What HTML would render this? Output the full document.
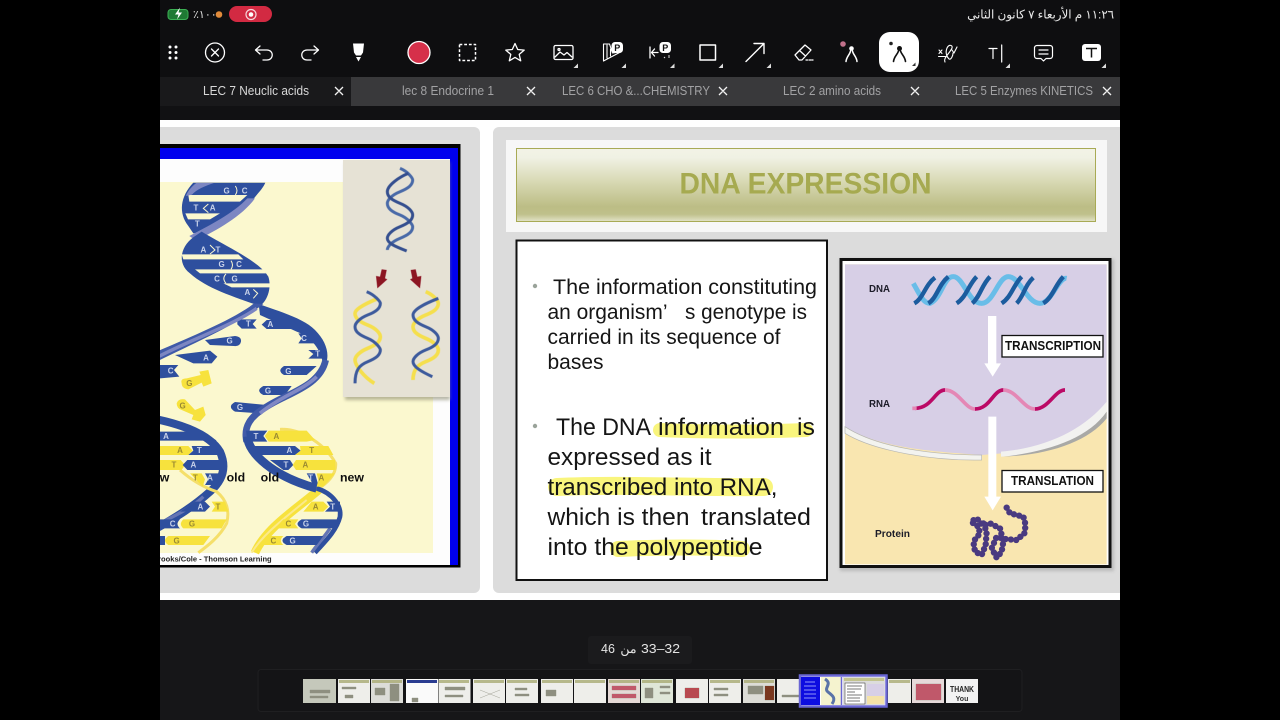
<!DOCTYPE html>
<html><head><meta charset="utf-8">
<style>html,body{margin:0;padding:0;background:#000;width:1280px;height:720px;overflow:hidden}svg{display:block}
.s{font-family:"Liberation Sans","Noto Sans CJK SC",sans-serif}
text{font-family:"Liberation Sans","DejaVu Sans",sans-serif}</style></head><body>
<svg xmlns="http://www.w3.org/2000/svg" width="1280" height="720" viewBox="0 0 1280 720">
<defs>
<linearGradient id="tg" x1="0" y1="0" x2="0" y2="1"><stop offset="0" stop-color="#f3f3e6"/><stop offset=".12" stop-color="#f0f1e4"/><stop offset=".45" stop-color="#d8d9b4"/><stop offset=".8" stop-color="#bcbd85"/><stop offset=".9" stop-color="#bfc08b"/><stop offset="1" stop-color="#e2e3c8"/></linearGradient>
<filter id="b"><feGaussianBlur stdDeviation="1.5"/></filter>
<filter id="sb"><feGaussianBlur stdDeviation=".9"/></filter>
<clipPath id="cr"><rect x="-10" y="158" width="950" height="1265"/></clipPath>
</defs>
<rect width="1280" height="720" fill="#000"/>
<rect x="160" width="960" height="77" fill="#0e0e10"/>
<rect x="160" y="77" width="960" height="43" fill="#111113"/>
<rect x="351" y="77" width="769" height="29" fill="#39393b"/>
<rect x="160" y="77" width="191" height="29" fill="#19191b"/>
<rect x="160" y="600" width="960" height="120" fill="#161618"/>

<!-- status bar -->
<rect x="168" y="9.500" width="20" height="10" rx="3" fill="#1f7a34" stroke="#3cb054" stroke-width="1"/>
<path d="M180 7.500l-5 7h3.500l-1.500 5 5-7h-3.500z" fill="#fff"/>
<text x="193" y="18" font-size="11" fill="#ddd" class="s">٪١٠٠</text>
<circle cx="219" cy="14.500" r="3.300" fill="#e08a3a"/>
<rect x="229" y="6" width="43" height="16" rx="8" fill="#d22a42"/>
<circle cx="251" cy="14.500" r="5" fill="none" stroke="#f5d5da" stroke-width="1.200"/><circle cx="251" cy="14.500" r="2.300" fill="#fff"/>
<text x="1114" y="18.500" font-size="11.800" fill="#e8e8e8" text-anchor="start" direction="rtl" class="s">١١:٢٦ م  الأربعاء ٧ كانون الثاني</text>

<!-- toolbar -->
<g fill="#fff">
<circle cx="170" cy="47" r="1.500"/><circle cx="176" cy="47" r="1.500"/><circle cx="170" cy="52.500" r="1.500"/><circle cx="176" cy="52.500" r="1.500"/><circle cx="170" cy="58" r="1.500"/><circle cx="176" cy="58" r="1.500"/>
</g>
<g fill="none" stroke="#fff" stroke-width="1.300" stroke-linecap="round" stroke-linejoin="round">
<circle cx="215" cy="52.500" r="9.500"/><path d="M211.500 49l7 7M218.500 49l-7 7"/>
<path d="M256 50h11c7 0 7 10 0 10h-4M260 46l-4.500 4 4.500 4"/>
<path d="M318 50h-11c-7 0-7 10 0 10h4M314 46l4.500 4-4.500 4"/>
<rect x="459.500" y="44.500" width="16" height="16" stroke-dasharray="2.800 1.900" stroke-linecap="butt" stroke-width="1.500"/>
<path d="M515 43.500l2.700 6 6.500.6-5 4.300 1.500 6.400-5.700-3.400-5.700 3.400 1.500-6.400-5-4.300 6.500-.6z"/>
<rect x="554" y="45.500" width="19" height="14" rx="1.500"/><path d="M555 57l5-5 4 3 3-2.500 5 4.500"/><circle cx="559" cy="49.500" r="1"/>
<path d="M603.500 44h6l3 9 8-1-17 9zM607 45v13M610.500 49v7" stroke-width="1.100"/>
<path d="M650 47v11M658 52.500h-6.500M654.500 49l-3 3.500 3 3.500"/>
<rect x="700" y="45" width="15.500" height="15" stroke-width="1.500"/>
<path d="M746 61.500l18-18M754 43.500h10v10" stroke-width="1.400"/>
<path d="M795 55l10-10 6 5-9 10h-3zM799.500 50.500l6 5.500M806 60h1.500M809 60h2M812 60h1"/>
<path d="M846 61.500c.5-5 4-7 4.500-10.500M857 61.500c-.5-5-4-7-4.500-10.500" stroke-width="1.500"/><circle cx="851.500" cy="48.500" r="2.300" fill="#fff" stroke="none"/>
<path d="M939 50l3 3.500M942 50l-3 3.500M938.500 56.500h7M945 62c-2-4 5-9 7-14 1-3-3-4-5 0-2 5 0 9 2 11 2 1 4-3 4-6M952 50l2 3 3-6" stroke-width="1.100"/>
<path d="M989 48.500h8M993 48.500v10M1001.700 45v17" stroke-width="1.200"/>
<path d="M1037 45.500h13a2.500 2.500 0 0 1 2.500 2.500v8a2.500 2.500 0 0 1-2.500 2.500h-4l-2.500 2.500-2.500-2.500h-4a2.500 2.500 0 0 1-2.500-2.500v-8a2.500 2.500 0 0 1 2.500-2.500zM1039 50h9M1039 54h9" stroke-width="1.200"/>
</g>
<path d="M353 43.500h11l-1 9-2 3h-5l-2-3z" fill="#fff"/><path d="M356 57h5l-2.500 4.500z" fill="#fff"/>
<circle cx="419" cy="52.500" r="11" fill="#d6304a" stroke="#fff" stroke-width="1.300"/>
<rect x="659.500" y="42" width="11.500" height="11" rx="3.500" fill="#fff"/><text x="665.300" y="51" font-size="9" font-weight="bold" text-anchor="middle" fill="#111">P</text>
<path d="M664 57l1 1M669 55v3" stroke="#ddd" stroke-width="1"/>
<rect x="611.500" y="42" width="11.500" height="11" rx="3.500" fill="#fff"/><text x="617.300" y="51" font-size="9" font-weight="bold" text-anchor="middle" fill="#111">P</text>
<circle cx="843" cy="44" r="2.800" fill="#c0708a"/>
<rect x="879" y="32" width="40" height="40" rx="11" fill="#fff"/>
<circle cx="891" cy="43.500" r="1.800" fill="#222"/>
<path d="M893.500 61.500c.5-5 4-7 5-10.500M905.500 61.500c-.5-5-4-7-5-10.500" fill="none" stroke="#111" stroke-width="1.600" stroke-linecap="round"/><circle cx="899.500" cy="48.500" r="2.500" fill="#111"/>
<path d="M915.500 62.500v3.500h-3.500z" fill="#333"/>
<rect x="1082" y="44" width="19" height="17" rx="3" fill="#fff"/><path d="M1086 48.500h11M1091.500 48.500v9" stroke="#111" stroke-width="1.500" fill="none"/>
<g fill="#ddd">
<path d="M578 63.500v4.500h-4.500z"/><path d="M626 63.500v4.500h-4.500z"/><path d="M674.500 63.500v4.500h-4.500z"/><path d="M723 63.500v4.500h-4.500z"/><path d="M771 63.500v4.500h-4.500z"/><path d="M1010 63.500v4.500h-4.500z"/><path d="M1106 63.500v4.500h-4.500z"/>
</g>

<!-- tabs -->
<g font-size="12.500" class="s">
<text x="203" y="95" fill="#d8d8d8" textLength="106" lengthAdjust="spacingAndGlyphs">LEC 7 Neuclic acids</text>
<text x="402" y="95" fill="#a2a2a4" textLength="92" lengthAdjust="spacingAndGlyphs">lec 8 Endocrine 1</text>
<text x="562" y="95" fill="#a2a2a4" textLength="148" lengthAdjust="spacingAndGlyphs">LEC 6 CHO &amp;...CHEMISTRY</text>
<text x="783" y="95" fill="#a2a2a4" textLength="98" lengthAdjust="spacingAndGlyphs">LEC 2 amino acids</text>
<text x="955" y="95" fill="#a2a2a4" textLength="138" lengthAdjust="spacingAndGlyphs">LEC 5 Enzymes KINETICS</text>
</g>
<g stroke="#f2f2f2" stroke-width="1.300" fill="none"><path d="M335 87l8 8M343 87l-8 8M527 87l8 8M535 87l-8 8M719 87l8 8M727 87l-8 8M911 87l8 8M919 87l-8 8M1103 87l8 8M1111 87l-8 8"/></g>

<!-- slide area -->
<rect x="160" y="120" width="960" height="480" fill="#fff"/>
<rect x="140" y="127" width="340" height="466" rx="6" fill="#dcdcdc"/>
<rect x="493" y="127" width="647" height="466" rx="6" fill="#dcdcdc"/>

<!-- left image -->
<rect x="140" y="144" width="320.500" height="423.500" fill="#000"/>
<rect x="140" y="148" width="318" height="417" fill="#0000ee"/>
<rect x="140" y="159" width="310" height="406" fill="#fdfdfd"/>
<rect x="140" y="182" width="293" height="371" fill="#fbf8cf"/>
<rect x="345" y="162" width="105" height="238" fill="#8a8a70" opacity=".6" filter="url(#b)"/>
<rect x="343" y="160" width="107" height="237" fill="#e6e2d5"/>
<g transform="translate(160 130) scale(.33333)" filter="url(#sb)">
 <g clip-path="url(#cr)">
 <!-- upper lobe -->
 <path d="M100 158C60 200 55 250 85 288L100 310L130 305C190 275 260 235 290 195C305 178 312 168 316 158Z" fill="#2f4f9e"/>
 <path d="M85 195H262L240 215H88ZM76 250H180L150 268H84Z" fill="#fbf8cf"/>
 <path d="M110 158C92 172 82 186 78 198L96 194C110 178 135 168 165 158Z" fill="#7c86c2"/>
 <path d="M262 205C220 250 150 285 88 318L108 332C170 300 245 260 285 205Z" fill="#7c86c2"/>
 <!-- second lobe -->
 <path d="M110 315C60 345 50 400 90 430C140 475 220 500 300 528C325 510 335 470 325 440C300 395 200 350 125 305Z" fill="#2f4f9e"/>
 <path d="M65 373H235L250 388H70ZM105 418H312L318 430H120ZM190 460H332L332 472H215Z" fill="#fbf8cf"/>
 <g fill="none" stroke="#fbf8cf" stroke-width="3">
  <path d="M226 168Q236 182 226 195M145 222L130 235L145 248M150 345L165 360L150 372M213 392Q222 405 213 418M198 432Q185 445 198 460M280 478L293 490L280 505"/>
 </g>
 <!-- strand C -->
 <path d="M296 522C360 545 430 565 465 600C495 630 508 665 500 695L488 695C480 660 460 625 410 605L300 555Z" fill="#2f4f9e"/>
 <g fill="#2f4f9e">
  <path d="M232 568H290L278 582L290 596H245L232 583Z"/>
  <path d="M320 570H400L420 597H320L305 584Z"/>
  <path d="M415 610H455L470 640H415L425 625Z"/>
  <path d="M445 660H497V686H445L460 672Z"/>
  <path d="M135 630L225 618Q245 620 243 635Q240 650 222 648L150 645Z"/>
  <path d="M45 675L150 662L172 680L155 700L100 700Z"/>
  <path d="M-5 705H55L42 720L58 740L0 745Z"/>
 </g>
 <!-- crossing ribbon -->
 <path d="M310 522C230 585 100 640 -10 695L-10 665C80 625 220 570 282 520Z" fill="#3f5aa8"/>
 <path d="M290 535C220 585 90 630 -5 680" fill="none" stroke="#7c86c2" stroke-width="10"/>
 <g transform="translate(0 690)">
  <!-- right strand -->
  <g fill="#2f4f9e">
   <path d="M372 18H470L440 45H372Q350 32 372 18Z"/>
   <path d="M310 78H395L375 105H310Q285 92 310 78Z"/>
   <path d="M225 126L320 135L300 160L225 155Q200 140 225 126Z"/>
  </g>
  <path d="M497 0C480 80 380 100 320 140C270 170 250 200 260 245" fill="none" stroke="#3f5aa8" stroke-width="20"/>
  <path d="M470 50C430 90 360 110 300 160" fill="none" stroke="#8088c4" stroke-width="11"/>
  <!-- right pair yellow strand -->
  <path d="M360 208C430 205 500 260 527 310C530 345 500 370 470 390" fill="none" stroke="#f5df6a" stroke-width="9"/>
  <path d="M478 388C420 440 320 500 285 578" fill="none" stroke="#f7e23e" stroke-width="26"/>
  <path d="M440 420C380 470 310 520 275 578" fill="none" stroke="#fbe98a" stroke-width="6"/>
  <path d="M262 230C265 280 340 350 470 385" fill="none" stroke="#2f4f9e" stroke-width="26"/>
  <path d="M470 385C520 400 545 440 540 470C530 510 500 540 465 578" fill="none" stroke="#2f4f9e" stroke-width="14"/>
  <path d="M510 505C490 535 470 555 455 578" fill="none" stroke="#6574b4" stroke-width="10"/>
  <g fill="#2f4f9e">
   <path d="M258 212H322L310 228L322 245H262Z"/>
   <path d="M270 258H405L422 272L405 285H305Z"/>
   <path d="M330 300H390L400 315L385 330H370Z"/>
   <path d="M440 340H465L475 375H460Z"/>
   <path d="M500 425H540V455H495L510 440Z"/>
   <path d="M425 478H535L520 505H425Q400 492 425 478Z"/>
   <path d="M380 528H490L470 555H380Q355 542 380 528Z"/>
  </g>
  <g fill="#f7e23e">
   <path d="M326 212L314 228L326 245H440L465 240L440 212Z"/>
   <path d="M420 258H505L520 285H405L422 272Z"/>
   <path d="M408 300H525L527 330H408L398 315Z"/>
   <path d="M470 340H525L490 380H470L475 360Z"/>
   <path d="M455 425H490L505 440L490 455H430Z"/>
   <path d="M370 478H415L405 492L415 505H345Z"/>
   <path d="M325 528H370Q355 542 370 555H310Z"/>
  </g>
  <!-- left pair -->
  <path d="M-10 178C70 195 150 225 180 275C200 320 190 360 150 395C100 440 50 470 -10 505" fill="none" stroke="#2f4f9e" stroke-width="24"/>
  <path d="M0 490C50 465 100 440 130 410" fill="none" stroke="#6574b4" stroke-width="10"/>
  <path d="M60 330C100 365 140 385 170 395C200 420 210 450 200 490C180 530 140 560 115 578" fill="none" stroke="#f5df6a" stroke-width="9"/>
  <path d="M-5 215H130L170 242H-5Z" fill="#2f4f9e"/>
  <g fill="#f7e23e">
   <path d="M-5 258H85L98 272L85 285H-5Z"/>
   <path d="M-5 300H62L75 315L65 330H-5Z"/>
   <path d="M90 340H125L135 358L128 380Z"/>
   <path d="M155 425H195L205 455H155L165 440Z"/>
   <path d="M70 478H200L185 505H70Q55 492 70 478Z"/>
   <path d="M25 528H150L130 555H25Q5 542 25 528Z"/>
  </g>
  <g fill="#2f4f9e">
   <path d="M95 258H165L180 285H85L100 272Z"/>
   <path d="M82 300H190V330H82L68 315Z"/>
   <path d="M135 340H190L170 375H135L145 358Z"/>
   <path d="M105 425H135L150 440L135 455H60Z"/>
   <path d="M-5 478H60Q45 492 60 505H-5Z"/>
   <path d="M-5 528H15V555H-5Z"/>
  </g>
  <!-- free G -->
  <path d="M65 70Q60 55 80 55L122 45L118 35L145 30L155 70L130 80L125 68L85 88Q65 85 65 70Z" fill="#f7e23e"/>
  <path d="M50 130Q55 115 75 118L105 150L130 140L137 165L120 185L95 178L100 165L65 150Q50 145 50 130Z" fill="#f7e23e"/>
  <g font-size="24" text-anchor="middle" fill="#c9d3ea" font-weight="bold">
   <text x="385" y="42">G</text><text x="324" y="100">G</text><text x="240" y="150">G</text>
   <text x="288" y="237">T</text>
   <text x="388" y="279">A</text><text x="378" y="322">T</text><text x="452" y="362">T</text><text x="518" y="448">T</text><text x="438" y="500">G</text><text x="398" y="550">G</text>
   <text x="18" y="237">A</text><text x="118" y="279">T</text><text x="100" y="322">A</text><text x="150" y="362">A</text><text x="121" y="448">A</text><text x="38" y="500">C</text>
  </g>
  <g font-size="24" text-anchor="middle" fill="#9a8a30" font-weight="bold">
   <text x="88" y="78">G</text><text x="68" y="145">G</text>
   <text x="349" y="237">A</text><text x="455" y="279">T</text><text x="436" y="322">A</text><text x="484" y="362">A</text><text x="467" y="448">A</text><text x="385" y="500">C</text><text x="340" y="550">C</text>
   <text x="60" y="279">A</text><text x="42" y="322">T</text><text x="106" y="362">T</text><text x="174" y="448">T</text><text x="96" y="500">G</text><text x="50" y="550">G</text>
  </g>
  <g font-size="37" font-weight="bold" fill="#111"><text x="200" y="365">old</text><text x="302" y="365">old</text><text x="540" y="365">new</text><text x="-44" y="365">new</text></g>
  <text x="-22" y="605" font-size="21" font-weight="bold" fill="#222" textLength="357" lengthAdjust="spacingAndGlyphs">Brooks/Cole - Thomson Learning</text>
 </g>
 <g font-size="24" text-anchor="middle" fill="#c9d3ea" font-weight="bold">
  <text x="200" y="190">G</text><text x="254" y="190">C</text><text x="108" y="242">T</text><text x="158" y="242">A</text><text x="112" y="290">T</text>
  <text x="130" y="367">A</text><text x="174" y="367">T</text><text x="185" y="411">G</text><text x="237" y="411">C</text><text x="171" y="455">C</text><text x="224" y="455">G</text><text x="262" y="495">A</text>
  <text x="265" y="589">T</text><text x="331" y="591">A</text><text x="209" y="640">G</text><text x="138" y="691">A</text><text x="432" y="633">C</text><text x="473" y="679">T</text><text x="32" y="730">C</text>
 </g>
 </g>
 <!-- inset helices -->
 <g fill="none" stroke-width="9">
  <path d="M720 115c25 10 38 30 38 35c0 15-13 25-38 35c-25 10-38 25-38 35c0 15 13 25 38 35c25 10 38 30 38 35c0 15-13 25-38 35c-25 10-38 25-38 35" stroke="#4a6aa8"/>
  <path d="M745 130c-25 10-63 35-63 55c0 15 13 25 38 35c25 10 38 25 38 35c0 15-13 25-38 35c-25 10-38 25-38 35c0 15 25 25 58 38" stroke="#35508f"/>
  <path d="M655 505c-25 10-70 30-70 45c0 15 13 25 38 35c25 10 38 25 38 35c0 15-13 25-38 35c-25 10-38 25-38 35c0 15 25 50 58 70" stroke="#f5df4e" stroke-width="11"/>
  <path d="M620 485c25 10 41 30 41 35c0 15-13 25-38 35c-25 10-38 25-38 35c0 15 13 25 38 35c25 10 38 30 38 35c0 15-13 25-38 35c-25 10-38 25-38 65" stroke="#3c5a9c"/>
  <path d="M797 485c25 10 38 30 38 35c0 15-13 25-38 35c-25 10-38 25-38 35c0 15 13 25 38 35c25 10 38 25 38 35c0 15-13 25-38 35c-25 10-38 25-38 55" stroke="#f5df4e" stroke-width="11"/>
  <path d="M835 505c-25 10-76 30-76 50c0 15 13 25 38 35c25 10 38 25 38 35c0 15-13 25-38 35c-25 10-38 25-38 35c0 15 25 30 58 45" stroke="#3c5a9c"/>
 </g>
 <path d="M665 418L680 420L675 445L682 448L652 475L648 438L660 440ZM767 418L752 420L757 445L750 448L780 475L784 438L772 440Z" fill="#8c1222"/>
</g>

<!-- title block -->
<rect x="506" y="140" width="601" height="92" fill="#f7f7f7"/>
<rect x="516.500" y="148.500" width="579" height="73" fill="url(#tg)" stroke="#a8aa55" stroke-width="1"/>
<text x="805.500" y="193.500" font-size="30" font-weight="bold" fill="#a6aa50" text-anchor="middle" textLength="252" lengthAdjust="spacingAndGlyphs">DNA EXPRESSION</text>

<!-- text box -->
<rect x="516.500" y="240.500" width="310.500" height="339.500" fill="#fff" stroke="#111" stroke-width="2"/>
<g stroke="#f9f57d" fill="none" stroke-linecap="round">
 <path d="M660 430C700 432 760 432 806 430" stroke-width="14"/>
 <path d="M557 487C620 484 700 488 764 487" stroke-width="18"/>
 <path d="M618 549C660 547 710 547 742 549" stroke-width="16"/>
</g>
<circle cx="535" cy="286" r="2.200" fill="#9aa39a"/><circle cx="535" cy="426" r="2.200" fill="#9aa39a"/>
<g fill="#151515">
 <g font-size="21.500">
 <text x="553" y="294" textLength="264" lengthAdjust="spacingAndGlyphs">The information constituting</text>
 <text x="547.500" y="319" textLength="120" lengthAdjust="spacingAndGlyphs">an organism’</text>
 <text x="685" y="319" textLength="122" lengthAdjust="spacingAndGlyphs">s genotype is</text>
 <text x="547.500" y="344" textLength="233" lengthAdjust="spacingAndGlyphs">carried in its sequence of</text>
 <text x="547.500" y="369" textLength="56" lengthAdjust="spacingAndGlyphs">bases</text>
 </g>
 <g font-size="24">
 <text x="556" y="435" textLength="95" lengthAdjust="spacingAndGlyphs">The DNA</text>
 <text x="658" y="435" textLength="126" lengthAdjust="spacingAndGlyphs">information</text>
 <text x="797" y="435" textLength="18" lengthAdjust="spacingAndGlyphs">is</text>
 <text x="547.500" y="465" textLength="164" lengthAdjust="spacingAndGlyphs">expressed as it</text>
 <text x="547.500" y="495" textLength="230" lengthAdjust="spacingAndGlyphs">transcribed into RNA,</text>
 <text x="547.500" y="525" textLength="142" lengthAdjust="spacingAndGlyphs">which is then</text>
 <text x="701" y="525" textLength="110" lengthAdjust="spacingAndGlyphs">translated</text>
 <text x="547.500" y="555" textLength="215" lengthAdjust="spacingAndGlyphs">into the polypeptide</text>
 </g>
</g>

<!-- right diagram -->
<rect x="840" y="259" width="274" height="312" fill="#888" opacity=".4" filter="url(#b)"/>
<rect x="841" y="259.500" width="269" height="307" fill="#fff" stroke="#111" stroke-width="3"/>
<g transform="translate(835 255) scale(.33333)">
 <rect x="30" y="28" width="785" height="900" fill="#f9e6b0"/>
 <path d="M30 28H815V445C750 520 640 580 500 595L440 600C300 590 130 580 30 515Z" fill="#d7cfe6"/>
 <path d="M30 515C130 580 300 600 440 600V615C300 618 120 590 30 535Z" fill="#f3f3ef" stroke="#b5b5b2" stroke-width="2"/>
 <path d="M498 590C640 578 750 520 815 440V490C750 560 640 600 498 605Z" fill="#f2f2f0"/>
 <path d="M505 605C640 590 760 550 815 470V490C760 560 640 600 505 605Z" fill="#a9a9a6"/>
 <g fill="none">
  <path d="M235 85C255 120 265 145 285 145C320 130 325 65 355 65C385 65 400 145 440 145C475 145 490 65 520 65C555 65 575 145 615 145C650 145 670 65 695 70" stroke="#69bde8" stroke-width="15"/>
  <path d="M238 145C265 130 270 90 300 68M280 145C305 130 310 90 340 65M365 145C395 125 400 90 425 65M412 145C435 125 440 90 465 65M500 145C530 125 535 90 560 65M545 145C565 125 570 90 595 68M625 145C655 125 660 90 685 65" stroke="#1c5c9e" stroke-width="13"/>
 </g>
 <path d="M240 460C290 460 300 405 330 405" fill="none" stroke="#bb0a66" stroke-width="11"/>
 <path d="M330 405C370 405 390 462 420 462" fill="none" stroke="#e487b5" stroke-width="11"/>
 <path d="M420 462C465 462 475 405 505 405" fill="none" stroke="#bb0a66" stroke-width="11"/>
 <path d="M505 405C545 405 565 462 600 462" fill="none" stroke="#e487b5" stroke-width="11"/>
 <path d="M600 462C640 462 660 405 690 405" fill="none" stroke="#bb0a66" stroke-width="11"/>
 <path d="M232 460H245" stroke="#e487b5" stroke-width="11"/>
 <path d="M459 183H484V325H498L473 365L448 325H459Z" fill="#fff"/>
 <path d="M460 485H484V725H498L473 766L448 725H460Z" fill="#fff"/>
 <path d="M515 758L525 775L545 780L565 785L572 810L568 835L545 855L510 852L485 845L470 880L485 908L500 890L505 860L495 820L465 805L445 812L425 790L408 800L430 815L435 835L415 860L420 890L440 900L452 870L455 830L445 805" fill="none" stroke="#4a3a80" stroke-width="19" stroke-linecap="round" stroke-linejoin="round" stroke-dasharray="0 16"/>
</g>
<g font-weight="bold" fill="#1c1c28">
 <text x="869" y="292" font-size="10" textLength="21" lengthAdjust="spacingAndGlyphs">DNA</text>
 <text x="869" y="407" font-size="10" textLength="21" lengthAdjust="spacingAndGlyphs">RNA</text>
 <text x="875" y="537" font-size="10.500" textLength="35" lengthAdjust="spacingAndGlyphs">Protein</text>
</g>
<rect x="1002" y="335.500" width="101" height="21.500" fill="#fff" stroke="#111" stroke-width="1.300"/>
<rect x="1002" y="470.500" width="101" height="21.500" fill="#fff" stroke="#111" stroke-width="1.300"/>
<text x="1005" y="350" font-size="12.500" font-weight="bold" fill="#111" textLength="96" lengthAdjust="spacingAndGlyphs">TRANSCRIPTION</text>
<text x="1011" y="485" font-size="12.500" font-weight="bold" fill="#111" textLength="83" lengthAdjust="spacingAndGlyphs">TRANSLATION</text>

<!-- side bars -->
<rect x="0" y="120" width="160" height="480" fill="#000"/>
<rect x="1120" y="120" width="160" height="480" fill="#000"/>

<!-- page label and thumb strip -->
<rect x="588" y="636" width="104" height="28" rx="3" fill="#1b1b1d"/>
<text x="601" y="653" font-size="12.500" fill="#e4e4e4" class="s">46</text>
<text x="628.500" y="653" font-size="12.500" fill="#e4e4e4" class="s" text-anchor="middle">من</text>
<text x="641" y="653" font-size="12.500" fill="#e4e4e4" class="s" textLength="39" lengthAdjust="spacingAndGlyphs">33–32</text>
<rect x="258" y="669.500" width="764" height="42" rx="3" fill="#141416" stroke="#1f1f21" stroke-width="1"/>
<g fill="#eeeeea">
 <rect x="303" y="679" width="33" height="24" fill="#c5c8bb"/>
 <rect x="338" y="679" width="32" height="24"/><rect x="371" y="679" width="32" height="24" fill="#dcdcd8"/>
 <rect x="406" y="679" width="32" height="24" fill="#fafafa"/><rect x="438.500" y="679" width="32" height="24"/>
 <rect x="473" y="679" width="32" height="24"/><rect x="506" y="679" width="32" height="24"/>
 <rect x="541" y="679" width="32" height="24"/><rect x="574" y="679" width="32" height="24"/>
 <rect x="608" y="679" width="32" height="24" fill="#e5d9d6"/><rect x="641" y="679" width="32" height="24" fill="#dfe6d8"/>
 <rect x="676" y="679" width="32" height="24"/><rect x="709" y="679" width="32" height="24"/>
 <rect x="743" y="679" width="32" height="24" fill="#dcdcd6"/><rect x="777" y="679" width="33" height="24"/>
 <rect x="888" y="679" width="23" height="24"/><rect x="912" y="679" width="32" height="24" fill="#e6dada"/>
 <rect x="946" y="679" width="32" height="24" fill="#f2f2f2"/>
</g>
<g fill="#a9ab74" opacity=".8">
 <rect x="339" y="680" width="30" height="3"/><rect x="372" y="680" width="30" height="3"/><rect x="439" y="680" width="30" height="3"/><rect x="474" y="680" width="30" height="3"/><rect x="507" y="680" width="30" height="3"/><rect x="542" y="680" width="30" height="3"/><rect x="575" y="680" width="30" height="3"/><rect x="609" y="680" width="30" height="3"/><rect x="642" y="680" width="30" height="3"/><rect x="710" y="680" width="30" height="3"/><rect x="744" y="680" width="30" height="3"/><rect x="889" y="680" width="21" height="3"/>
</g>
<rect x="407" y="680" width="30" height="3" fill="#2a3c90"/>
<path d="M310 690h20v3h-20zM310 696h18v2h-18zM342 687h14v2h-14zM345 695h8v3h-8zM375 688h10v7h-10zM390 684h9v17h-9zM412 698h6v4h-6zM445 687h20v3h-20zM445 695h18v2h-18zM480 690l20 8M500 690l-20 8M515 688h12v2h-12zM515 694h14v2h-14zM546 690h10v6h-10zM612 686h24v4h-24zM612 694h24v4h-24zM645 688h8v10h-8zM660 686h10v2h-10zM660 692h10v2h-10zM685 688h14v10h-14zM714 688h14v2h-14zM714 694h14v2h-14zM748 686h15v8h-15zM765 686h9v14h-9zM782 695h24v2h-24zM916 684h25v16h-25z" fill="#8e8f80" stroke="#8e8f80" stroke-width=".4"/>
<path d="M765 686h9v14h-9z" fill="#7a3820"/><path d="M612 686h24v4h-24zM612 694h24v4h-24zM916 684h25v16h-25z" fill="#c0586a"/><path d="M685 688h14v10h-14z" fill="#b84a50"/>
<text x="962" y="692" font-size="8" font-weight="bold" text-anchor="middle" fill="#222" textLength="24" lengthAdjust="spacingAndGlyphs">THANK</text><text x="962" y="701" font-size="7" font-weight="bold" text-anchor="middle" fill="#333">You</text>
<!-- selected -->
<rect x="800" y="675.500" width="86.500" height="31" fill="#fff" stroke="#6a66d4" stroke-width="2.500"/>
<rect x="801" y="677" width="19" height="28" fill="#0d0de0"/>
<rect x="821" y="677" width="20" height="28" fill="#f5f3cf"/>
<path d="M825 679c8 5-2 9 3 13 5 4 8 6 4 12" fill="none" stroke="#5a73a8" stroke-width="3"/>
<path d="M841.500 677v28" stroke="#6a66d4" stroke-width="1.500"/>
<rect x="843" y="677" width="42" height="28" fill="#dcdcdc"/>
<rect x="844" y="678" width="40" height="3" fill="#c2c38e"/>
<rect x="845" y="683" width="20" height="21" fill="#fff" stroke="#222" stroke-width=".5"/>
<rect x="867" y="684" width="17" height="20" fill="#d7cfe6"/><rect x="867" y="696" width="17" height="8" fill="#f4e2a8"/>
<path d="M847 686h15M847 689h14M847 692h8M847 695h15M847 698h13M847 701h13" stroke="#777" stroke-width=".9"/>
<path d="M805 682h10M804 686h12M804 690h12M804 694h12M804 698h12" stroke="#b9c2ff" stroke-width=".7"/>
</svg>
</body></html>
